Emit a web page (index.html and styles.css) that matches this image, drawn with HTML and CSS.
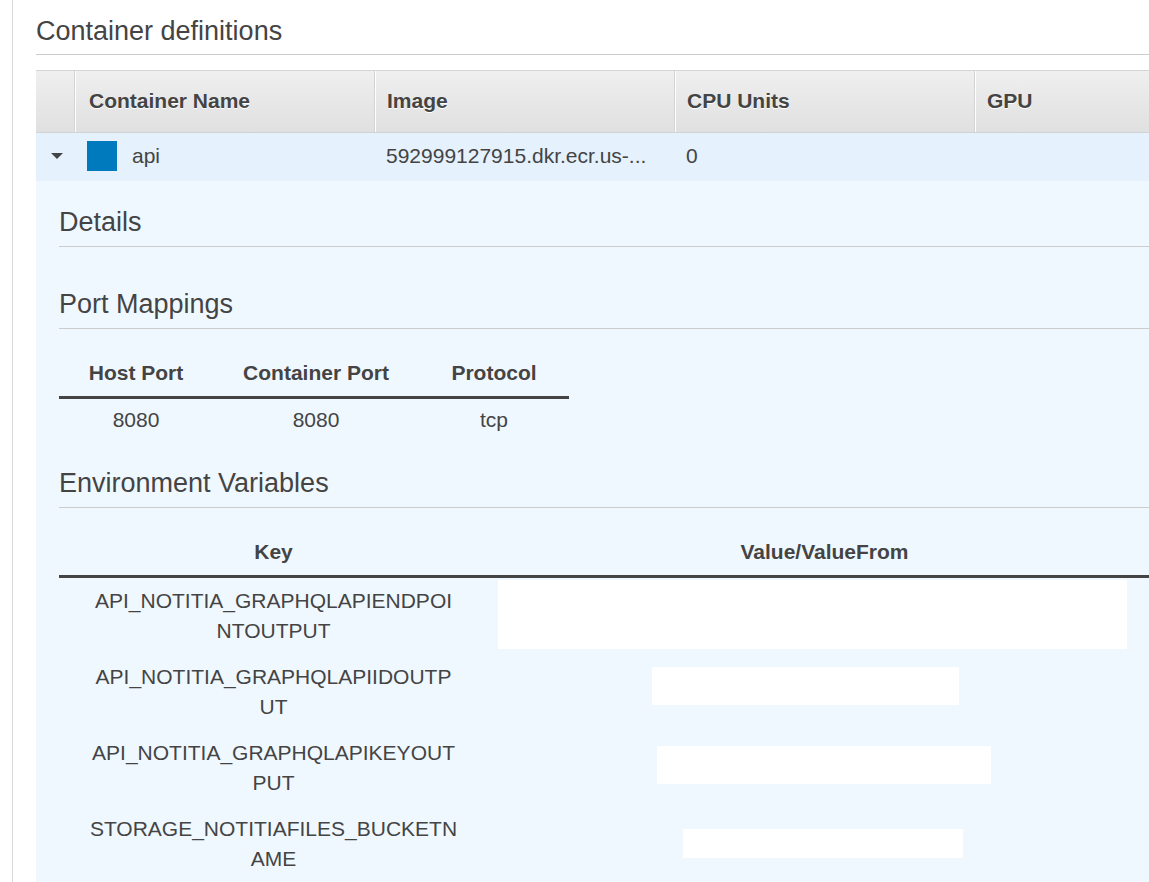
FILE: index.html
```html
<!DOCTYPE html>
<html lang="en">
<head>
<meta charset="utf-8">
<title>Container definitions</title>
<link rel="stylesheet" href="styles.css">
</head>
<body>
<div class="page">
  <h2 class="title">Container definitions</h2>
  <div class="ctable">
    <div class="chead">
      <div class="hcell hcell-toggle"></div>
      <div class="hcell hcell-first">Container Name</div>
      <div class="hcell">Image</div>
      <div class="hcell">CPU Units</div>
      <div class="hcell hcell-last">GPU</div>
    </div>
    <div class="crow">
      <div class="cell cell-toggle"><span class="caret"></span></div>
      <div class="cell cell-name"><span class="swatch"></span><span>api</span></div>
      <div class="cell cell-image">592999127915.dkr.ecr.us-...</div>
      <div class="cell">0</div>
      <div class="cell"></div>
    </div>
    <div class="cdetail">
      <section class="sec sec-details">
        <h3 class="sec-title">Details</h3>
      </section>
      <section class="sec sec-ports">
        <h3 class="sec-title">Port Mappings</h3>
        <table class="ports">
          <thead>
            <tr><th class="p1">Host Port</th><th class="p2">Container Port</th><th class="p3">Protocol</th></tr>
          </thead>
          <tbody>
            <tr><td>8080</td><td>8080</td><td>tcp</td></tr>
          </tbody>
        </table>
      </section>
      <section class="sec sec-env">
        <h3 class="sec-title">Environment Variables</h3>
        <table class="env">
          <colgroup><col class="col-key"><col class="col-val"></colgroup>
          <thead>
            <tr><th>Key</th><th>Value/ValueFrom</th></tr>
          </thead>
          <tbody>
            <tr><td class="key">API_NOTITIA_GRAPHQLAPIENDPOINTOUTPUT</td><td class="val"><div class="redact r1"></div></td></tr>
            <tr><td class="key">API_NOTITIA_GRAPHQLAPIIDOUTPUT</td><td class="val"><div class="redact r2"></div></td></tr>
            <tr><td class="key">API_NOTITIA_GRAPHQLAPIKEYOUTPUT</td><td class="val"><div class="redact r3"></div></td></tr>
            <tr><td class="key">STORAGE_NOTITIAFILES_BUCKETNAME</td><td class="val"><div class="redact r4"></div></td></tr>
          </tbody>
        </table>
      </section>
    </div>
  </div>
</div>
</body>
</html>
```
FILE: styles.css
```css
* { box-sizing: border-box; }

html, body {
  margin: 0;
  padding: 0;
  background: #fff;
  overflow: hidden;
}

body {
  font-family: "Liberation Sans", Arial, Helvetica, sans-serif;
  font-size: 21px;
  line-height: 30px;
  color: #444;
}

.page {
  margin-left: 12px;
  border-left: 1px solid #d9d9d9;
  padding: 16px 0 0 23px;
  width: 1172px;
  min-height: 900px;
}

.title {
  margin: 0;
  font-size: 27px;
  line-height: 30px;
  font-weight: normal;
  color: #444;
  padding-bottom: 8px;
  border-bottom: 1px solid #ccc;
}

.ctable {
  margin-top: 15px;
  border-top: 1px solid #d5d5d5;
}

.chead {
  display: grid;
  grid-template-columns: 39px 300px 300px 300px 1fr;
  background: linear-gradient(#efefef, #e0e0e0);
  border-bottom: 1px solid #d3d3d3;
}

.hcell {
  padding: 15px 0 15px 12px;
  height: 61px;
  font-weight: bold;
  text-shadow: 0 1px 0 #fff;
  border-right: 1px solid #d3d3d3;
  box-shadow: inset 1px 0 0 #fff;
  white-space: nowrap;
}

.hcell-first { padding-left: 14px; }
.hcell-toggle { box-shadow: none; }
.hcell-last { border-right: none; }

.crow {
  display: grid;
  grid-template-columns: 39px 300px 300px 300px 1fr;
  background: #e5f1fc;
}

.cell {
  padding: 8px 0 10px 11px;
  height: 48px;
  white-space: nowrap;
  overflow: hidden;
}

.cell-toggle {
  padding: 0;
  display: flex;
  align-items: center;
  justify-content: center;
}

.caret {
  display: block;
  width: 0;
  height: 0;
  margin-left: 2px;
  margin-top: -2px;
  border-left: 6px solid transparent;
  border-right: 6px solid transparent;
  border-top: 6px solid #444;
}

.cell-name {
  display: flex;
  align-items: center;
  gap: 15px;
  padding-left: 12px;
}

.swatch {
  display: block;
  width: 30px;
  height: 30px;
  background: #0079bd;
}

.cdetail {
  background: #f0f8ff;
  padding: 26px 23px 0 23px;
}

.sec-title {
  margin: 0 0 17px 0;
  font-size: 27px;
  line-height: 30px;
  font-weight: normal;
  color: #444;
  padding-bottom: 9px;
  border-bottom: 1px solid #ccc;
}

.sec-details { margin-bottom: 42px; }
.sec-details .sec-title { margin-bottom: 0; }

.sec-ports { margin-bottom: 27px; }

table {
  border-collapse: collapse;
  border-spacing: 0;
}

th {
  font-weight: bold;
  text-align: center;
  padding: 12px 0 8px 0;
  border-bottom: 3px solid #444;
}

.ports th.p1 { width: 154px; }
.ports th.p2 { width: 206px; }
.ports th.p3 { width: 150px; }

.ports td {
  text-align: center;
  padding: 6px 0 6px 0;
}

.env {
  width: 100%;
  table-layout: fixed;
}

.col-key { width: 429px; }

.env td.key {
  padding: 8px 30px;
  text-align: center;
  word-break: break-all;
  vertical-align: top;
}

.env td.val {
  padding: 0;
  vertical-align: top;
}

.redact {
  background: #fff;
}

.r1 { margin: 2px 0 0 10px; width: 629px; height: 69px; }
.r2 { margin: 13px 0 0 164px; width: 307px; height: 38px; }
.r3 { margin: 16px 0 0 169px; width: 334px; height: 38px; }
.r4 { margin: 23px 0 0 195px; width: 280px; height: 29px; }
```
